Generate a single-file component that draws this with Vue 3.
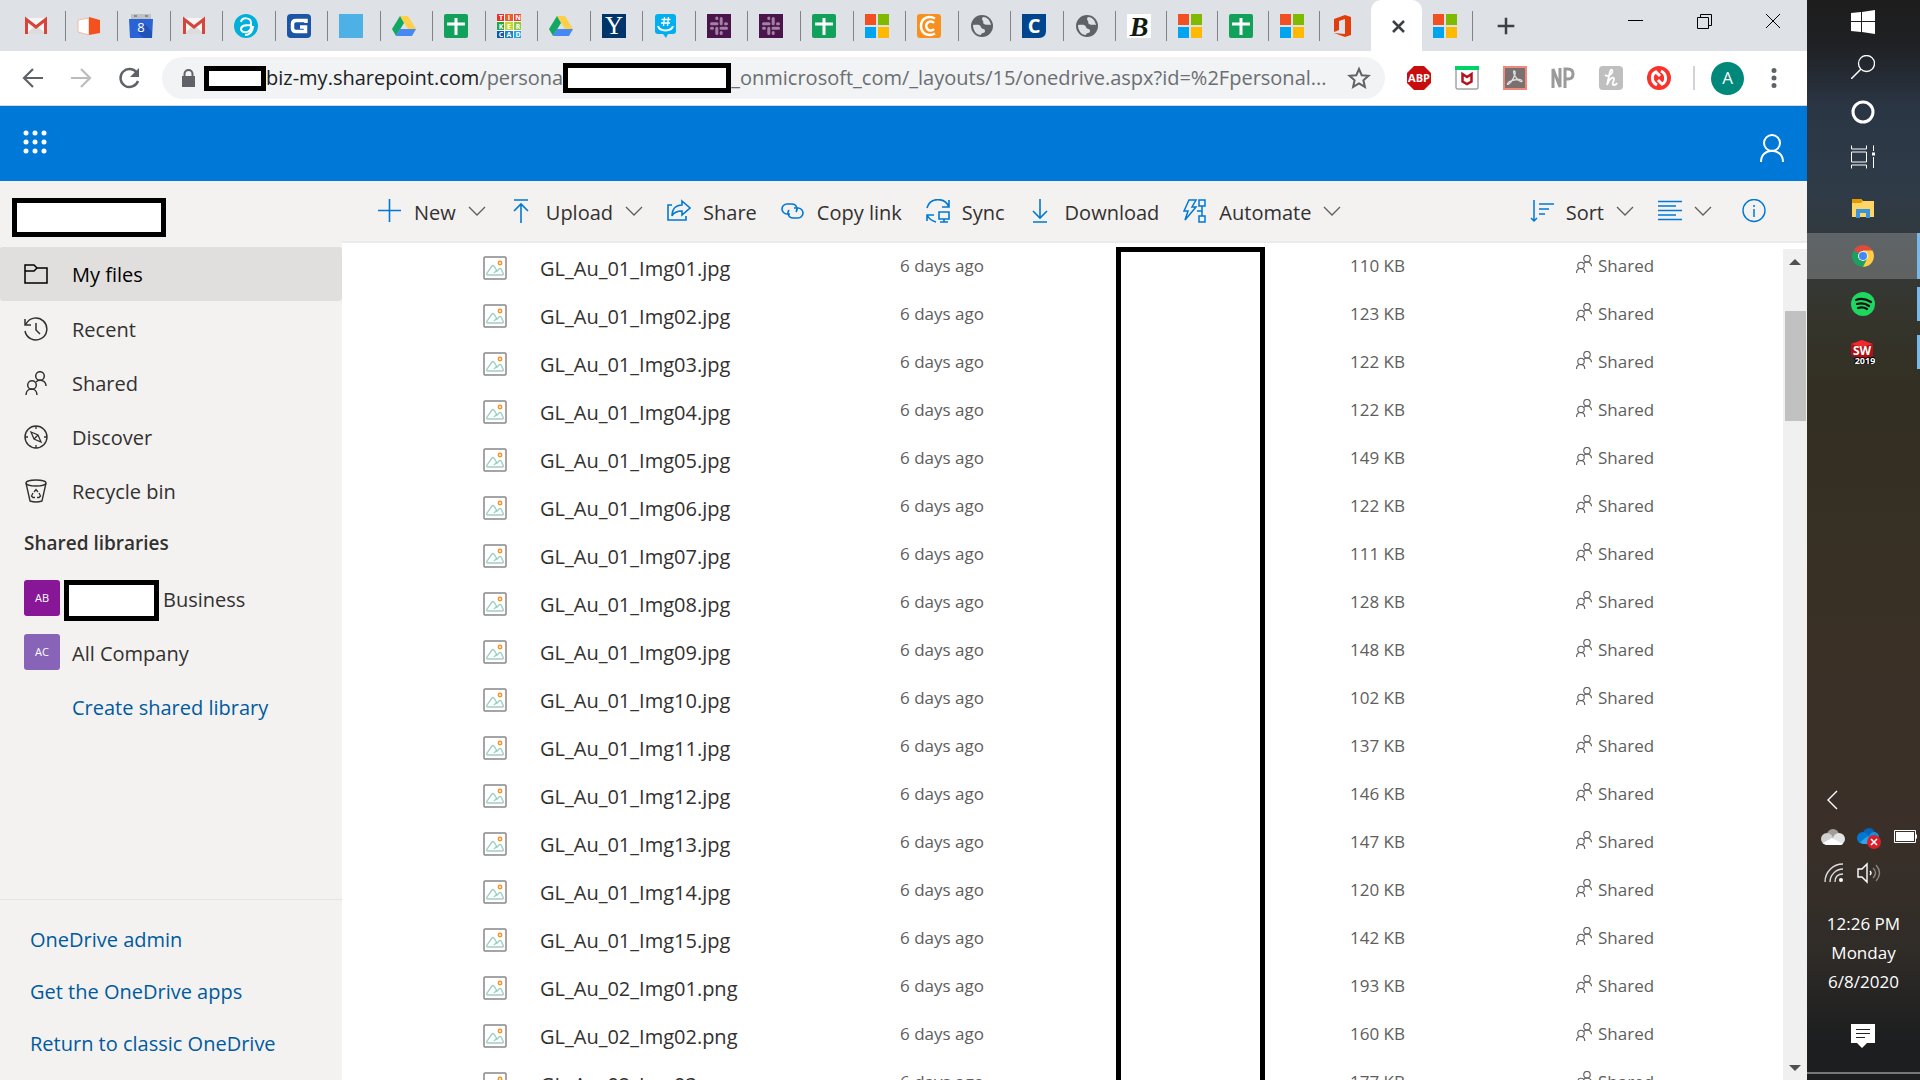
<script setup>
import { ref } from 'vue'

const tabs = [
  { icon: 'gmail', label: 'Gmail' },
  { icon: 'office-box', label: 'Office' },
  { icon: 'calendar', label: 'Calendar' },
  { icon: 'gmail', label: 'Gmail' },
  { icon: 'swirl', label: 'App' },
  { icon: 'letter-g', label: 'G' },
  { icon: 'blue-square', label: 'App' },
  { icon: 'drive', label: 'Drive' },
  { icon: 'sheets', label: 'Sheets' },
  { icon: 'tinkercad', label: 'Tinkercad' },
  { icon: 'drive', label: 'Drive' },
  { icon: 'letter-y', label: 'Y' },
  { icon: 'groupme', label: 'GroupMe' },
  { icon: 'slack', label: 'Slack' },
  { icon: 'slack', label: 'Slack' },
  { icon: 'sheets', label: 'Sheets' },
  { icon: 'microsoft', label: 'Microsoft' },
  { icon: 'orange-c', label: 'C' },
  { icon: 'globe', label: 'Page' },
  { icon: 'blue-c', label: 'C' },
  { icon: 'globe', label: 'Page' },
  { icon: 'letter-b', label: 'B', narrow: true },
  { icon: 'microsoft', label: 'Microsoft', narrow: true },
  { icon: 'sheets', label: 'Sheets', narrow: true },
  { icon: 'microsoft', label: 'Microsoft', narrow: true },
  { icon: 'office', label: 'Office', narrow: true },
  { icon: 'tab-close', label: 'Close tab', narrow: true, active: true },
  { icon: 'microsoft', label: 'Microsoft', narrow: true }
]

const extensions = ['abp', 'mcafee', 'acrobat', 'np', 'honey', 'sync-red']

const commands = [
  { icon: 'plus', label: 'New', menu: true },
  { icon: 'upload', label: 'Upload', menu: true },
  { icon: 'share', label: 'Share' },
  { icon: 'link', label: 'Copy link' },
  { icon: 'sync', label: 'Sync' },
  { icon: 'download', label: 'Download' },
  { icon: 'automate', label: 'Automate', menu: true }
]

const navItems = [
  { icon: 'folder', label: 'My files' },
  { icon: 'recent', label: 'Recent' },
  { icon: 'people', label: 'Shared' },
  { icon: 'compass', label: 'Discover' },
  { icon: 'bin', label: 'Recycle bin' }
]
const activeNav = ref('My files')

const footerLinks = ['OneDrive admin', 'Get the OneDrive apps', 'Return to classic OneDrive']

const sizes = [110, 123, 122, 122, 149, 122, 111, 128, 148, 102, 137, 146, 147, 120, 142, 193, 160, 177]
const files = sizes.map((size, i) => {
  const second = i >= 15
  const num = String(second ? i - 14 : i + 1).padStart(2, '0')
  return {
    name: second ? `GL_Au_02_Img${num}.png` : `GL_Au_01_Img${num}.jpg`,
    modified: '6 days ago',
    size: `${size} KB`
  }
})

const pinned = [
  { icon: 'explorer', label: 'File Explorer' },
  { icon: 'chrome', label: 'Chrome', running: true, active: true },
  { icon: 'spotify', label: 'Spotify', running: true },
  { icon: 'solidworks', label: 'SolidWorks', running: true }
]

const address = ref('_onmicrosoft_com/_layouts/15/onedrive.aspx?id=%2Fpersonal...')
</script>

<template>
  <svg class="sprite" aria-hidden="true">
    <symbol id="gmail" viewBox="0 0 24 24">
      <path d="M2 4h20v16H2z" fill="#f5f5f5" />
      <path d="M2 20 12 11l10 9z" fill="#dcdcdc" />
      <path d="M2.500 20V5.500L12 13l9.500-7.500V20" fill="none" stroke="#d6443a" stroke-width="3" />
    </symbol>
    <symbol id="office-box" viewBox="0 0 24 24">
      <path d="M1 6 12 4v17L1 18z" fill="#fff" stroke="#f3b9a5" />
      <path d="m12 3 11 3v13l-11 2z" fill="#f4511e" />
    </symbol>
    <symbol id="calendar" viewBox="0 0 24 24">
      <path d="M2 0h20v6H2z" fill="#c2c2c2" />
      <path d="M5 1h3v2H5zM16 1h3v2h-3z" fill="#8b8b8b" />
      <path d="M0 5h24l-1 19H1z" fill="#2a63d6" />
      <path d="m15 9 8 9v6h-8l-6-5z" fill="#2152b8" />
      <text x="12" y="18" font-size="13" text-anchor="middle" fill="#fff">8</text>
    </symbol>
    <symbol id="swirl" viewBox="0 0 24 24">
      <circle cx="12" cy="12" r="12" fill="#00b0d8" />
      <path d="M7 8c1-5 10-5 10 1v4c0 6-10 7-10 2 0-4 5-4 10-4M11 21c5 0 8-4 8-9" fill="none" stroke="#fff" stroke-width="2" />
    </symbol>
    <symbol id="letter-g" viewBox="0 0 24 24">
      <rect width="24" height="24" rx="4" fill="#1c55a5" />
      <path d="M19 9V6.500H9Q5.500 6.500 5.500 10v4q0 3.500 3.500 3.500h9.500V13H13" fill="none" stroke="#fff" stroke-width="3.500" />
    </symbol>
    <symbol id="blue-square" viewBox="0 0 24 24"><path d="M0 0h24v24H0z" fill="#4db1e6" /></symbol>
    <symbol id="drive" viewBox="0 0 24 24">
      <path d="M8 2h8l8 13h-8z" fill="#ffcf48" />
      <path d="m8 2 4 7L4 22l-4-7z" fill="#11a861" />
      <path d="M8 15h16l-4 7H4z" fill="#4688f4" />
    </symbol>
    <symbol id="sheets" viewBox="0 0 24 24">
      <rect width="24" height="24" rx="2" fill="#12a15b" />
      <path d="M3 10h18M12 4v17" stroke="#fff" stroke-width="3" />
    </symbol>
    <symbol id="tinkercad" viewBox="0 0 24 24">
      <path d="M0 0h24v24H0z" fill="#fff" />
      <path d="M0 0h7v7H0z" fill="#e53328" /><path d="M8 0h8v7H8z" fill="#f0592a" /><path d="M17 0h7v7h-7z" fill="#e8452c" />
      <path d="M0 8h7v8H0z" fill="#27a544" /><path d="M8 8h8v8H8z" fill="#c3d82e" /><path d="M17 8h7v8h-7z" fill="#8dc63f" />
      <path d="M0 17h7v7H0z" fill="#1257a5" /><path d="M8 17h8v7H8z" fill="#1c84c6" /><path d="M17 17h7v7h-7z" fill="#29a3dc" />
      <g font-size="7" font-weight="700" fill="#fff" text-anchor="middle">
        <text x="4" y="6">T</text><text x="12" y="6">I</text><text x="21" y="6">N</text>
        <text x="4" y="15">K</text><text x="12" y="15">E</text><text x="21" y="15">R</text>
        <text x="4" y="23">C</text><text x="12" y="23">A</text><text x="21" y="23">D</text>
      </g>
    </symbol>
    <symbol id="letter-y" viewBox="0 0 24 24">
      <path d="M0 0h24v24H0z" fill="#00356b" />
      <text class="serif" x="12" y="20" font-size="25" text-anchor="middle" fill="#fff">Y</text>
    </symbol>
    <symbol id="groupme" viewBox="0 0 24 24">
      <path d="M4 0h15q3 0 3 3v14q0 3-3 3h-5l-2 4-3-4H4q-3 0-3-3V3q0-3 3-3z" fill="#00aff0" />
      <path d="m10.500 3-1 9M14.500 3l-1 9M7.500 5.500h9M7 9h9" fill="none" stroke="#fff" stroke-width="1.300" />
      <path d="M4 12c2 6 13 6 15 0" fill="none" stroke="#fff" stroke-width="2" />
    </symbol>
    <symbol id="slack" viewBox="0 0 24 24">
      <path d="M0 0h24v24H0z" fill="#4a154b" />
      <path d="M4.500 9.800H10M9.800 4v.500M14.200 4.500v5.300M19.500 9.800h-1M19.500 14.200H14M14.200 19.500v-1M9.800 19.500v-5.300M4.500 14.200h1" stroke="#a381a4" stroke-width="3" stroke-linecap="round" />
    </symbol>
    <symbol id="microsoft" viewBox="0 0 24 24">
      <path d="M0 0h11v11H0z" fill="#f25022" /><path d="M13 0h11v11H13z" fill="#7fba00" />
      <path d="M0 13h11v11H0z" fill="#00a4ef" /><path d="M13 13h11v11H13z" fill="#ffb900" />
    </symbol>
    <symbol id="orange-c" viewBox="0 0 24 24">
      <rect width="24" height="24" rx="3" fill="#f7901e" />
      <path d="M18 4.500C12 1 4 4 4 12s8 11 14 7.500" fill="none" stroke="#fff" stroke-width="2.500" />
      <path d="M17 9a4.500 4.500 0 1 0 0 6" fill="none" stroke="#fff" stroke-width="2.500" />
    </symbol>
    <symbol id="globe" viewBox="0 0 24 24">
      <circle cx="12" cy="12" r="11" fill="#5f6368" />
      <path d="M3 11c3 0 7-1 8 2s4 1 4 4-4 1-4 4c-5 0-8-5-8-10zM13 3c-3 3 2 4 0 6 3 3 5 1 8 2-1-5-4-8-8-8z" fill="#dee1e6" />
    </symbol>
    <symbol id="blue-c" viewBox="0 0 24 24">
      <path d="M0 0h24v17q0 7-7 7H0z" fill="#00468f" />
      <text x="12" y="19" font-size="20" font-weight="700" text-anchor="middle" fill="#fff">C</text>
    </symbol>
    <symbol id="letter-b" viewBox="0 0 24 24">
      <path d="M0 0h24v24H0z" fill="#fff" />
      <text class="serif" x="12" y="22" font-size="28" font-weight="700" font-style="italic" text-anchor="middle" fill="#101b10">B</text>
    </symbol>
    <symbol id="office" viewBox="0 0 24 24">
      <path d="M3 5 14 1l6 2v18l-6 2L3 19l11 1V5L8 7v9l-5 2z" fill="#e33d0b" />
    </symbol>
    <symbol id="tab-close" viewBox="0 0 24 24"><path d="m7 7 11 11M18 7 7 18" stroke="#3c4043" stroke-width="2.500" /></symbol>

    <symbol id="abp" viewBox="0 0 24 24">
      <path d="M7 0h10l7 7v10l-7 7H7l-7-7V7z" fill="#c70d0d" />
      <text x="12" y="16" font-size="11" font-weight="700" text-anchor="middle" fill="#fff">ABP</text>
    </symbol>
    <symbol id="mcafee" viewBox="0 0 24 24">
      <rect x="1" y="1" width="22" height="22" rx="1" fill="#fff" stroke="#777" />
      <path d="M0 0h24v4H0z" fill="#00d26a" />
      <path d="m7.500 8 4.500 3 4.500-3v7.500L12 18l-4.500-2.500z" fill="none" stroke="#b5121b" stroke-width="2.500" />
    </symbol>
    <symbol id="acrobat" viewBox="0 0 24 24">
      <path d="M1 1h22v22H1z" fill="#7b7070" stroke="#f0887c" stroke-width="2" />
      <path d="M11 5c3 0 0 7-3 11-2 3-5 3-3 1 2-3 14-5 14-2 0 2-5-1-7-5-1-2-2-5-1-5z" fill="none" stroke="#ddd" stroke-width="1.300" />
    </symbol>
    <symbol id="np" viewBox="0 0 24 24">
      <path d="M2 22V3l7 18V2M14 22V3h3q5 0 5 5t-5 5h-3" fill="none" stroke="#9a9a9a" stroke-width="3" />
    </symbol>
    <symbol id="honey" viewBox="0 0 24 24">
      <rect width="24" height="24" rx="4" fill="#bfbfbf" />
      <path d="M6 9c4 3 9-3 7-5s-3 7-5 15c2-7 7-9 7-6 0 2-3 6 0 6q2 0 3-2" fill="none" stroke="#fff" stroke-width="1.800" />
    </symbol>
    <symbol id="sync-red" viewBox="0 0 24 24">
      <circle cx="12" cy="12" r="12" fill="#f9322c" />
      <path d="M10 19C4 16 4 8 9 6l4 4M14 5c6 3 6 11 1 13l-4-4" fill="none" stroke="#fff" stroke-width="3" />
    </symbol>

    <symbol id="back" viewBox="0 0 24 24"><path d="M22 12H3M12 3l-9 9 9 9" fill="none" stroke="currentColor" stroke-width="2.200" /></symbol>
    <symbol id="forward" viewBox="0 0 24 24"><path d="M2 12h19M12 3l9 9-9 9" fill="none" stroke="currentColor" stroke-width="2.200" /></symbol>
    <symbol id="reload" viewBox="0 0 24 24">
      <path d="M20 7a9 9 0 1 0 1 8" fill="none" stroke="currentColor" stroke-width="2.400" />
      <path d="M22 2v9h-9z" fill="currentColor" />
    </symbol>
    <symbol id="lock" viewBox="0 0 24 24">
      <path d="M6 10h13v11H6z" fill="#5f6368" /><path d="M8.500 10V8a4 4 0 0 1 8 0v2" fill="none" stroke="#5f6368" stroke-width="2" />
    </symbol>
    <symbol id="star" viewBox="0 0 24 24">
      <path d="m12 3 2.700 6.200 6.800.6-5.100 4.500 1.500 6.600L12 17.400l-5.900 3.500 1.500-6.600-5.100-4.500 6.800-.6z" fill="none" stroke="#5f6368" stroke-width="2" />
    </symbol>
    <symbol id="dots" viewBox="0 0 24 24"><path d="M12 2a2.500 2.500 0 1 1 0 5 2.500 2.500 0 0 1 0-5zm0 7.500a2.500 2.500 0 1 1 0 5 2.500 2.500 0 0 1 0-5zm0 7.500a2.500 2.500 0 1 1 0 5 2.500 2.500 0 0 1 0-5z" fill="#5f6368" /></symbol>
    <symbol id="add" viewBox="0 0 24 24"><path d="M12 2v20M2 12h20" stroke="#3c4043" stroke-width="3" /></symbol>
    <symbol id="minimize" viewBox="0 0 24 24"><path d="M5 11.500h15" stroke="#000" /></symbol>
    <symbol id="restore" viewBox="0 0 24 24"><path d="M5.500 8.500h11v11h-11zM8.500 8V5.500h11v11H17" fill="none" stroke="#000" /></symbol>
    <symbol id="win-close" viewBox="0 0 24 24"><path d="m5 5 14 14M19 5 5 19" stroke="#000" /></symbol>

    <symbol id="waffle" viewBox="0 0 24 24">
      <g fill="#fff">
        <circle v-for="n in 9" :key="n" :cx="3 + ((n - 1) % 3) * 9" :cy="3 + Math.floor((n - 1) / 3) * 9" r="2.500" />
      </g>
    </symbol>
    <symbol id="person" viewBox="0 0 28 28">
      <circle cx="14" cy="9" r="8" fill="none" stroke="#fff" stroke-width="2" />
      <path d="M3 28c0-15 22-15 22 0" fill="none" stroke="#fff" stroke-width="2" />
    </symbol>

    <symbol id="plus" viewBox="0 0 24 24"><path d="M11.500 0v23M0 11.500h23" stroke="currentColor" stroke-width="1.600" /></symbol>
    <symbol id="upload" viewBox="0 0 24 24"><path d="M4 1h14M11 24V5M4 12l7-7 7 7" fill="none" stroke="currentColor" stroke-width="1.600" /></symbol>
    <symbol id="share" viewBox="0 0 24 24">
      <path d="M5 6H1v15h18v-4M15 2l8 7-8 7v-4c-5 0-8 1-10 5 0-7 4-11 10-11z" fill="none" stroke="currentColor" stroke-width="1.600" />
    </symbol>
    <symbol id="link" viewBox="0 0 24 24">
      <path d="M9 15H6A5 5 0 0 1 6 5h5a5 5 0 0 1 4 8M13 9h4a5 5 0 0 1 0 10h-5a5 5 0 0 1-4-8" fill="none" stroke="currentColor" stroke-width="1.600" />
    </symbol>
    <symbol id="sync" viewBox="0 0 24 24">
      <path d="M1 9C4-2 19-2 23 8M23 1v7h-7M1 22v-6h7M1 16c2 4 5 6 9 7M13 13h10v7H13zM18 20v3M14 23h8" fill="none" stroke="currentColor" stroke-width="1.600" />
    </symbol>
    <symbol id="download" viewBox="0 0 24 24"><path d="M4 23h14M11 0v18M4 12l7 7 7-7" fill="none" stroke="currentColor" stroke-width="1.600" /></symbol>
    <symbol id="automate" viewBox="0 0 24 24">
      <path d="M6 1h7L9 8h4L2 21l3-9H1zM16 1h6v6h-6zM16 17h6v6h-6zM19 7v10M14 12h5" fill="none" stroke="currentColor" stroke-width="1.500" />
    </symbol>
    <symbol id="sort" viewBox="0 0 24 24"><path d="M4 1v21M1 19l3 3 3-3M9 5h15M9 10h10M9 15h6" fill="none" stroke="currentColor" stroke-width="1.500" /></symbol>
    <symbol id="lines" viewBox="0 0 24 24"><path d="M0 2.500h24M0 7h18M0 11.500h24M0 16h18M0 20.500h24" stroke="currentColor" stroke-width="1.300" /></symbol>
    <symbol id="info" viewBox="0 0 24 24">
      <circle cx="12" cy="11.500" r="11" fill="none" stroke="currentColor" stroke-width="1.400" />
      <path d="M12 6v2M12 10v8" stroke="currentColor" stroke-width="1.500" />
    </symbol>
    <symbol id="chevron" viewBox="0 0 18 18"><path d="m1 5 8 8 8-8" fill="none" stroke="#605e5c" stroke-width="1.300" /></symbol>

    <symbol id="folder" viewBox="0 0 24 24"><path d="M1 3h9l3 3h10v15H1zM1 9h9l3-3" fill="none" stroke="currentColor" stroke-width="1.500" /></symbol>
    <symbol id="recent" viewBox="0 0 24 24">
      <path d="M2 7a11 11 0 1 1-1 7M1 2v6h6M12 6v7l4 4" fill="none" stroke="currentColor" stroke-width="1.500" />
    </symbol>
    <symbol id="people" viewBox="0 0 24 24">
      <circle cx="8" cy="14" r="4.300" fill="none" stroke="currentColor" stroke-width="1.500" />
      <circle cx="16" cy="5" r="4.300" fill="none" stroke="currentColor" stroke-width="1.500" />
      <path d="M2 24c0-8 11-8 11 0M12 11c3-3 10-2 10 4" fill="none" stroke="currentColor" stroke-width="1.500" />
    </symbol>
    <symbol id="compass" viewBox="0 0 24 24">
      <circle cx="12" cy="12" r="11" fill="none" stroke="currentColor" stroke-width="1.400" />
      <path d="M12 1v3M12 20v3M1 12h3M20 12h3M7 7l7 3 3 7-7-3zM10 14l4-4" fill="none" stroke="currentColor" stroke-width="1.300" />
    </symbol>
    <symbol id="bin" viewBox="0 0 24 24">
      <ellipse cx="12" cy="4" rx="10" ry="3" fill="none" stroke="currentColor" stroke-width="1.400" />
      <path d="m2 4 4 18q6 2 12 0l4-18" fill="none" stroke="currentColor" stroke-width="1.400" />
      <path d="m10 13 2-2.500 2 2.500M15 14l1.500 3-1.500 1.500h-2M11 18.500H9L7.500 17 9 14" fill="none" stroke="currentColor" stroke-width="1.300" />
    </symbol>
    <symbol id="image" viewBox="0 0 24 24">
      <rect x="1" y="1" width="22" height="22" rx="1" fill="#fff" stroke="#8a8886" stroke-width="1.500" />
      <circle cx="17" cy="7" r="1.700" fill="none" stroke="#f7931e" stroke-width="1.500" />
      <path d="M5 19q-2 0-1-2l5-7q1-1 2 0l3 5 2-2q1-1 2 0l2 4q1 2-1 2zM11 17l3-3" fill="none" stroke="#9fcfc2" stroke-width="1.400" />
    </symbol>

    <symbol id="windows" viewBox="0 0 24 24"><path d="m0 3 10-1v9H0zM11 2l13-2v11H11zM0 12h10v10L0 21zM11 12h13v12l-13-2z" fill="#fff" /></symbol>
    <symbol id="search" viewBox="0 0 24 24"><circle cx="15.500" cy="8.500" r="8" fill="none" stroke="#fff" stroke-width="1.300" /><path d="M10 14 0 24" stroke="#fff" stroke-width="1.500" /></symbol>
    <symbol id="cortana" viewBox="0 0 24 24"><circle cx="12" cy="12" r="10" fill="none" stroke="#fff" stroke-width="3" /></symbol>
    <symbol id="taskview" viewBox="0 0 24 24"><path d="M.5.500V4h15V.500M.5 7h15v10H.500zM.5 23.500V20h15v3.500M22.500.500V6M22.500 12v11" fill="none" stroke="#fff" /><path d="M21 7.500h3v3h-3z" fill="#fff" /></symbol>
    <symbol id="explorer" viewBox="0 0 24 24">
      <path d="M1 3h9l2 2h11v16H1z" fill="#ffd566" /><path d="M1 3h9l2 2-2 2H1z" fill="#e19b00" />
      <path d="M5 13h14v9h-4v-5H9v5H5z" fill="#3a94dc" />
    </symbol>
    <symbol id="chrome" viewBox="0 0 24 24">
      <path d="M12 12 2.500 6.500A11 11 0 0 1 21.500 6.500z" fill="#dd4b3e" />
      <path d="M12 12V6.500h9.500A11 11 0 0 1 12 23z" fill="#ffce44" />
      <path d="m12 12 4 3-4 8A11 11 0 0 1 2.500 6.500z" fill="#1ba05e" />
      <circle cx="12" cy="12" r="5" fill="#f1f1f1" /><circle cx="12" cy="12" r="4" fill="#4587f3" />
    </symbol>
    <symbol id="spotify" viewBox="0 0 24 24">
      <circle cx="12" cy="12" r="12" fill="#1ed760" />
      <path d="M5 8c5-2 10-1 15 2M6 12c4-1 8-1 12 2M7 16c3-1 6-1 9 1" fill="none" stroke="#101010" stroke-width="2.200" stroke-linecap="round" />
    </symbol>
    <symbol id="solidworks" viewBox="0 0 24 24">
      <path d="m0 4 11-4 11 4v12l-11 4L0 15z" fill="#b30e13" /><path d="m0 4 11-4 11 4-11 3z" fill="#ee2a2f" />
      <g font-weight="700" fill="#fff" text-anchor="middle">
        <text x="11" y="15" font-size="12">SW</text>
        <text class="outlined" x="14" y="24" font-size="9">2019</text>
      </g>
    </symbol>
    <symbol id="tray-chevron" viewBox="0 0 24 24"><path d="M16 2 7 11l9 9" fill="none" stroke="#fff" stroke-width="1.400" /></symbol>
    <symbol id="cloud" viewBox="0 0 24 24">
      <circle cx="12" cy="10" r="6" fill="#a09d9b" /><circle cx="6" cy="14" r="6" fill="#d2d0ce" /><circle cx="18" cy="14" r="6" fill="#e4e4e4" /><path d="m2 18 9-5 11 6-2 1H5z" fill="#fff" />
    </symbol>
    <symbol id="cloud-error" viewBox="0 0 24 24">
      <circle cx="12" cy="9" r="6" fill="#0364b8" /><circle cx="6" cy="13" r="6" fill="#0078d4" /><circle cx="17" cy="12" r="5" fill="#1490df" /><path d="m3 17 8-6 7 8H6z" fill="#28a8ea" />
      <circle cx="17" cy="17" r="7" fill="#d9202a" /><path d="m14 14 6 6M20 14l-6 6" stroke="#fff" stroke-width="1.600" />
    </symbol>
    <symbol id="battery" viewBox="0 0 24 24"><path d="M1.500 5.500h21v12h-21zM23.500 9.500v4" fill="none" stroke="#fff" /><path d="M3 7h18v9H3z" fill="#fff" /></symbol>
    <symbol id="wifi" viewBox="0 0 24 24">
      <path d="M4 21C4 11 12 3 22 3M9 21C9 14 15 8 22 8M14 21c0-5 3-8 8-8" fill="none" stroke="#ddd" stroke-width="1.400" /><circle cx="20" cy="19" r="2" fill="#fff" />
    </symbol>
    <symbol id="speaker" viewBox="0 0 24 24">
      <path d="M1 8h4l5-5v18l-5-5H1zM13 10q2 2 0 4" fill="none" stroke="#fff" stroke-width="1.400" />
      <path d="M16 7q5 5 0 10M19 4q7 8 0 16" fill="none" stroke="#8a8782" stroke-width="1.400" />
    </symbol>
    <symbol id="notification" viewBox="0 0 24 24"><path d="M0 0h24v19h-8l-5 5-5-5H0z" fill="#fff" /><path d="M5 5.500h14M5 9.500h14M5 13.500h9" stroke="#222" /></symbol>
  </svg>

  <div class="desktop">
    <div class="browser">
      <div class="tabstrip">
        <div class="tabs">
          <button
            v-for="(tab, i) in tabs"
            :key="i"
            type="button"
            class="tab"
            :class="{
              'tab--narrow': tab.narrow,
              'tab--active': tab.active,
              'tab--plain': tabs[i + 1]?.active
            }"
            :aria-label="tab.label"
          >
            <svg class="icon"><use :href="'#' + tab.icon" /></svg>
          </button>
        </div>
        <button type="button" class="tabstrip__add" aria-label="New tab"><svg class="icon icon--small"><use href="#add" /></svg></button>
        <div class="window-controls">
          <button type="button" aria-label="Minimize"><svg class="icon"><use href="#minimize" /></svg></button>
          <button type="button" aria-label="Restore"><svg class="icon"><use href="#restore" /></svg></button>
          <button type="button" aria-label="Close"><svg class="icon"><use href="#win-close" /></svg></button>
        </div>
      </div>

      <div class="toolbar">
        <div class="toolbar__nav">
          <button type="button" aria-label="Back"><svg class="icon"><use href="#back" /></svg></button>
          <button type="button" class="toolbar__disabled" aria-label="Forward"><svg class="icon"><use href="#forward" /></svg></button>
          <button type="button" aria-label="Reload"><svg class="icon"><use href="#reload" /></svg></button>
        </div>
        <div class="omnibox">
          <svg class="icon"><use href="#lock" /></svg>
          <span class="redacted redacted--host"></span>
          <span class="omnibox__host">biz-my.sharepoint.com</span><span>/persona</span>
          <span class="redacted redacted--user"></span>
          <input v-model="address" class="omnibox__input" type="text" aria-label="Address" />
          <button type="button" aria-label="Bookmark"><svg class="icon"><use href="#star" /></svg></button>
        </div>
        <div class="extensions">
          <button v-for="ext in extensions" :key="ext" type="button" :aria-label="ext">
            <svg class="icon"><use :href="'#' + ext" /></svg>
          </button>
        </div>
        <div class="profile">
          <button type="button" class="profile__avatar">A</button>
          <button type="button" aria-label="Menu"><svg class="icon"><use href="#dots" /></svg></button>
        </div>
      </div>

      <header class="suite-bar">
        <button type="button" class="suite-bar__waffle" aria-label="App launcher"><svg class="icon"><use href="#waffle" /></svg></button>
        <button type="button" class="suite-bar__person" aria-label="Account"><svg class="icon icon--large"><use href="#person" /></svg></button>
      </header>

      <div class="page">
        <aside class="sidebar">
          <div class="redacted redacted--owner"></div>
          <nav class="sidebar__nav">
            <a
              v-for="item in navItems"
              :key="item.label"
              href="#"
              class="nav-item"
              :class="{ 'nav-item--active': activeNav === item.label }"
              @click.prevent="activeNav = item.label"
            >
              <svg class="icon"><use :href="'#' + item.icon" /></svg>
              <span>{{ item.label }}</span>
            </a>
          </nav>
          <h2 class="sidebar__heading">Shared libraries</h2>
          <a href="#" class="library library--tight">
            <span class="library__badge library__badge--ab">AB</span>
            <span class="redacted redacted--library"></span>
            <span class="library__name">Business</span>
          </a>
          <a href="#" class="library">
            <span class="library__badge library__badge--ac">AC</span>
            <span class="library__name">All Company</span>
          </a>
          <a href="#" class="library library--create"><span class="library__name">Create shared library</span></a>
          <div class="sidebar__footer">
            <a v-for="link in footerLinks" :key="link" href="#">{{ link }}</a>
          </div>
        </aside>

        <main class="content">
          <div class="commands">
            <button v-for="cmd in commands" :key="cmd.label" type="button" class="command">
              <svg class="icon"><use :href="'#' + cmd.icon" /></svg>
              <span>{{ cmd.label }}</span>
              <svg v-if="cmd.menu" class="icon icon--chevron"><use href="#chevron" /></svg>
            </button>
            <button type="button" class="command command--right">
              <svg class="icon"><use href="#sort" /></svg>
              <span>Sort</span>
              <svg class="icon icon--chevron"><use href="#chevron" /></svg>
            </button>
            <button type="button" class="command" aria-label="View options">
              <svg class="icon"><use href="#lines" /></svg>
              <svg class="icon icon--chevron"><use href="#chevron" /></svg>
            </button>
            <button type="button" class="command command--info" aria-label="Details"><svg class="icon"><use href="#info" /></svg></button>
          </div>

          <div class="list">
            <div class="list__scroll">
              <table class="files">
                <colgroup>
                  <col class="files__col-icon" />
                  <col class="files__col-name" />
                  <col class="files__col-date" />
                  <col class="files__col-owner" />
                  <col class="files__col-size" />
                  <col />
                </colgroup>
                <tbody>
                  <tr v-for="file in files" :key="file.name">
                    <td class="files__icon"><svg class="icon"><use href="#image" /></svg></td>
                    <td class="files__name">{{ file.name }}</td>
                    <td>{{ file.modified }}</td>
                    <td></td>
                    <td>{{ file.size }}</td>
                    <td>
                      <span class="files__shared"><svg class="icon icon--tiny"><use href="#people" /></svg>Shared</span>
                    </td>
                  </tr>
                </tbody>
              </table>
              <div class="redacted redacted--column"></div>
            </div>
            <div class="scrollbar">
              <span class="scrollbar__arrow scrollbar__arrow--up"></span>
              <span class="scrollbar__thumb"></span>
              <span class="scrollbar__arrow scrollbar__arrow--down"></span>
            </div>
          </div>
        </main>
      </div>
    </div>

    <aside class="taskbar">
      <div class="taskbar__system">
        <button type="button" aria-label="Start"><svg class="icon"><use href="#windows" /></svg></button>
        <button type="button" aria-label="Search"><svg class="icon"><use href="#search" /></svg></button>
        <button type="button" aria-label="Cortana"><svg class="icon"><use href="#cortana" /></svg></button>
        <button type="button" aria-label="Task view"><svg class="icon"><use href="#taskview" /></svg></button>
      </div>
      <div class="taskbar__apps">
        <button
          v-for="app in pinned"
          :key="app.icon"
          type="button"
          class="app"
          :class="{ 'app--running': app.running, 'app--active': app.active }"
          :aria-label="app.label"
        >
          <svg class="icon"><use :href="'#' + app.icon" /></svg>
        </button>
      </div>
      <div class="tray">
        <svg class="icon"><use href="#tray-chevron" /></svg>
        <div class="tray__row">
          <svg class="icon"><use href="#cloud" /></svg>
          <svg class="icon"><use href="#cloud-error" /></svg>
          <svg class="icon"><use href="#battery" /></svg>
        </div>
        <div class="tray__row">
          <svg class="icon"><use href="#wifi" /></svg>
          <svg class="icon"><use href="#speaker" /></svg>
        </div>
      </div>
      <div class="clock">
        <span>12:26 PM</span>
        <span>Monday</span>
        <span>6/8/2020</span>
      </div>
      <button type="button" class="taskbar__notify" aria-label="Notifications"><svg class="icon"><use href="#notification" /></svg></button>
      <div class="taskbar__desktop"></div>
    </aside>
  </div>
</template>

<style>
body {
  overflow: hidden;
}
</style>

<style scoped>
.sprite {
  display: none;
}

.serif {
  font-family: "Liberation Serif", serif;
}

.outlined {
  stroke: #000;
  stroke-width: 2px;
  paint-order: stroke;
}

.desktop {
  display: flex;
  height: 100vh;
  font-family: "Open Sans", "Noto Sans", sans-serif;
  font-size: 20px;
  line-height: 28px;
  color: #323130;
}

button {
  display: flex;
  align-items: center;
  justify-content: center;
  padding: 0;
  border: 0;
  background: none;
  font: inherit;
  color: inherit;
}

a {
  color: inherit;
  text-decoration: none;
}

.icon {
  flex: none;
  display: block;
  width: 24px;
  height: 24px;
}

.icon--small {
  width: 20px;
  height: 20px;
}

.icon--large {
  width: 28px;
  height: 28px;
}

.icon--chevron,
.icon--tiny {
  width: 18px;
  height: 18px;
}

.redacted {
  flex: none;
  box-sizing: border-box;
  border: 5px solid #000;
  background: #fff;
}

.browser {
  flex: 1;
  min-width: 0;
  display: flex;
  flex-direction: column;
  background: #fff;
}

/* tab strip */
.tabstrip {
  display: flex;
  height: 51px;
  background: #dee1e6;
}

.tabs {
  flex: 0 1 1460px;
  display: flex;
  padding-left: 13px;
}

.tab {
  position: relative;
  flex: 1;
  justify-content: flex-start;
  padding-left: 11px;
}

.tab--narrow {
  flex: 0 0 51px;
}

.tab::after {
  content: "";
  position: absolute;
  right: 0;
  top: 11px;
  width: 1px;
  height: 30px;
  background: #808389;
}

.tab--active {
  border-radius: 10px 10px 0 0;
  background: #fff;
  padding-left: 15px;
}

.tab--active::after {
  display: none;
}

.tab--plain::after {
  display: none;
}

.tabstrip__add {
  width: 66px;
}

.window-controls {
  display: flex;
  margin-left: auto;
  height: 42px;
}

.window-controls button {
  width: 69px;
}

/* toolbar */
.toolbar {
  display: flex;
  align-items: center;
  height: 54px;
  border-bottom: 1px solid #d5d8dc;
}

.toolbar__nav {
  display: flex;
  gap: 24px;
  padding: 0 21px;
  color: #5f6368;
}

.toolbar__disabled {
  color: #babcbe;
}

.omnibox {
  flex: 1;
  min-width: 0;
  box-sizing: border-box;
  display: flex;
  align-items: center;
  height: 42px;
  padding: 0 14px;
  border-radius: 21px;
  background: #f1f3f4;
  color: #6b6e72;
}

.omnibox__host {
  color: #202124;
}

.omnibox__input {
  flex: 1;
  min-width: 0;
  margin-right: 12px;
  padding: 0;
  border: 0;
  outline: 0;
  background: none;
  font: inherit;
  color: inherit;
  text-overflow: ellipsis;
}

.redacted--host {
  width: 62px;
  height: 25px;
  margin-left: 4px;
}

.redacted--user {
  width: 168px;
  height: 30px;
}

.extensions {
  display: flex;
  gap: 24px;
  padding: 0 22px;
}

.profile {
  display: flex;
  align-items: center;
  gap: 18px;
  padding: 0 21px 0 16px;
  border-left: 2px solid #d0d3d7;
  height: 24px;
}

.profile__avatar {
  width: 33px;
  height: 33px;
  border-radius: 50%;
  background: #00897b;
  color: #fff;
  font-size: 17px;
}

/* suite bar */
.suite-bar {
  display: flex;
  align-items: center;
  justify-content: space-between;
  height: 75px;
  padding: 0 21px 0 23px;
  background: #0078d7;
}

.suite-bar__waffle {
  padding-bottom: 4px;
}

.suite-bar__person {
  padding-top: 9px;
}

.page {
  flex: 1;
  min-height: 0;
  display: flex;
}

/* sidebar */
.sidebar {
  flex: 0 0 342px;
  box-sizing: border-box;
  display: flex;
  flex-direction: column;
  padding-top: 17px;
  background: #f3f2f1;
}

.redacted--owner {
  width: 154px;
  height: 39px;
  margin: 0 12px 10px;
}

.nav-item {
  box-sizing: border-box;
  display: flex;
  align-items: center;
  gap: 24px;
  height: 54px;
  padding: 0 0 2px 24px;
}

.nav-item span {
  padding-top: 2px;
}

.nav-item--active {
  margin-bottom: 2px;
  padding-bottom: 0;
  border-radius: 3px;
  background: #e1dfdd;
  color: #000;
  font-weight: 500;
}

.sidebar__heading {
  margin: 0;
  padding: 10px 24px 14px;
  font-size: 19px;
  line-height: 28px;
  font-weight: 600;
}

.library {
  display: flex;
  align-items: center;
  gap: 12px;
  height: 54px;
  padding-left: 24px;
}

.library--tight {
  gap: 4px;
}

.library__name {
  padding-top: 3px;
}

.library--create {
  padding-left: 72px;
  color: #005a9e;
}

.library__badge {
  width: 36px;
  height: 36px;
  border-radius: 3px;
  font-size: 11px;
  line-height: 36px;
  text-align: center;
  color: #fff;
}

.library__badge--ab {
  background: #881798;
}

.library__badge--ac {
  background: #8764b8;
}

.redacted--library {
  width: 95px;
  height: 41px;
  margin-top: 5px;
}

.sidebar__footer {
  display: flex;
  flex-direction: column;
  gap: 24px;
  margin-top: auto;
  padding: 26px 30px 22px;
  border-top: 1px solid #e6e4e2;
  color: #005a9e;
}

/* content */
.content {
  flex: 1;
  min-width: 0;
  display: flex;
  flex-direction: column;
}

.commands {
  display: flex;
  align-items: center;
  gap: 24px;
  height: 60px;
  padding: 0 41px 0 36px;
  border-bottom: 2px solid #edebe9;
  background: #f3f2f1;
}

.command {
  gap: 12px;
  white-space: nowrap;
}

.command span {
  padding-top: 3px;
}

.command .icon:first-child {
  color: #0078d4;
}

.command--right {
  margin-left: auto;
}

.command--info {
  margin-left: 6px;
}

.list {
  flex: 1;
  min-height: 0;
  display: flex;
}

.list__scroll {
  position: relative;
  flex: 1;
  min-width: 0;
  overflow: hidden;
}

.files {
  width: 100%;
  table-layout: fixed;
  border-collapse: collapse;
  font-size: 17px;
  line-height: 24px;
  color: #605e5c;
}

.files__col-icon {
  width: 198px;
}

.files__col-name {
  width: 360px;
}

.files__col-date {
  width: 216px;
}

.files__col-owner {
  width: 234px;
}

.files__col-size {
  width: 225px;
}

.files td {
  height: 48px;
  padding: 0 0 2px;
  box-sizing: border-box;
  white-space: nowrap;
}

.files .files__icon {
  padding: 2px 0 0 141px;
}

.files .files__name {
  padding: 4px 0 0;
  font-size: 20px;
  color: #323130;
}

.files__shared {
  display: flex;
  align-items: center;
  gap: 5px;
}

.files__shared .icon {
  margin-bottom: 4px;
}

.redacted--column {
  position: absolute;
  left: 774px;
  top: 4px;
  bottom: -5px;
  width: 149px;
}

.scrollbar {
  display: flex;
  flex-direction: column;
  align-items: center;
  width: 24px;
  margin-top: 6px;
  background: #f0f0f0;
}

.scrollbar__arrow {
  border: 6px solid transparent;
}

.scrollbar__arrow--up {
  margin-top: 4px;
  border-bottom-color: #505050;
}

.scrollbar__thumb {
  width: 21px;
  height: 110px;
  margin-top: 46px;
  background: #c1c1c1;
}

.scrollbar__arrow--down {
  margin: auto 0 3px;
  border-top-color: #505050;
}

/* taskbar */
.taskbar {
  flex: 0 0 113px;
  display: flex;
  flex-direction: column;
  background: linear-gradient(#1d1d1d 0, #1f2023 4%, #2b3645 10%, #2f3b47 18%, #35362f 28%, #332f22 36%, #3a3026 60%, #3b3029 76%, #302c28 88%, #1d1e1f 96%);
}

.taskbar button {
  box-sizing: border-box;
  width: 100%;
  padding-right: 2px;
}

.taskbar__system {
  display: flex;
  flex-direction: column;
  gap: 21px;
  padding-top: 10px;
}

.taskbar__apps {
  display: flex;
  flex-direction: column;
  gap: 2px;
  padding-top: 16px;
}

.app {
  height: 46px;
  position: relative;
}

.app--running::after {
  content: "";
  position: absolute;
  right: 0;
  top: 6px;
  bottom: 6px;
  width: 3px;
  background: #76b9ed;
}

.app--active {
  background: rgba(255, 255, 255, 0.22);
}

.app--active::after {
  top: 0;
  bottom: 0;
}

.tray {
  display: flex;
  flex-direction: column;
  gap: 12px;
  margin-top: auto;
  padding-left: 14px;
}

.tray__row {
  display: flex;
  gap: 12px;
}

.clock {
  display: flex;
  flex-direction: column;
  margin: 24px 0 28px;
  font-size: 17px;
  line-height: 29px;
  text-align: center;
  color: #fff;
}

.taskbar__desktop {
  height: 6px;
  margin-top: 24px;
  border-top: 2px solid #777;
}
</style>
